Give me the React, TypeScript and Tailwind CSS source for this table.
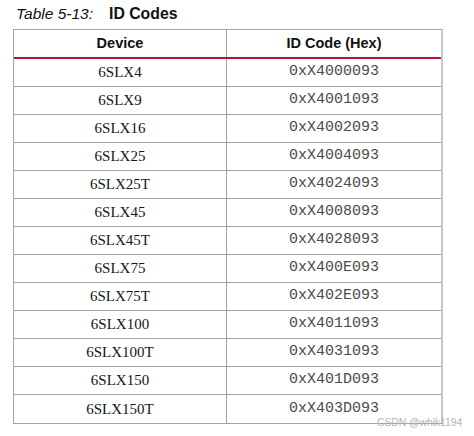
import React from "react";

const rows: [string, string][] = [
  ["6SLX4", "0xX4000093"],
  ["6SLX9", "0xX4001093"],
  ["6SLX16", "0xX4002093"],
  ["6SLX25", "0xX4004093"],
  ["6SLX25T", "0xX4024093"],
  ["6SLX45", "0xX4008093"],
  ["6SLX45T", "0xX4028093"],
  ["6SLX75", "0xX400E093"],
  ["6SLX75T", "0xX402E093"],
  ["6SLX100", "0xX4011093"],
  ["6SLX100T", "0xX4031093"],
  ["6SLX150", "0xX401D093"],
  ["6SLX150T", "0xX403D093"],
];

export default function App() {
  return (
    <div className="relative w-[474px] h-[436px] overflow-hidden bg-white">
      <div className="h-[29px] pl-[16px] pt-[4px] flex items-start text-[#111]" style={{ fontFamily: '"Liberation Sans", Arial, sans-serif' }}>
        <span className="italic text-[15.5px] leading-[19px]">Table 5-13:</span>
        <span className="ml-[16px] font-bold text-[15.8px] leading-[19px]">ID Codes</span>
      </div>
      <div className="ml-[13px] w-[430px] border-l border-t border-b border-[#a3a3a3] border-r-2 border-r-[#c6c6c6]">
        <div className="grid grid-cols-[213px_1fr] h-[27px]" style={{ fontFamily: '"Liberation Sans", Arial, sans-serif' }}>
          <div className="border-r border-[#a3a3a3] flex items-center justify-center font-bold text-[14.5px] text-[#111]">Device</div>
          <div className="flex items-center justify-center font-bold text-[14.5px] text-[#111]">ID Code (Hex)</div>
        </div>
        <div className="h-[2px] bg-[#b3172f]" />
        {rows.map(([d, c], i) => (
          <div
            key={d}
            className={`grid grid-cols-[213px_1fr] h-[28px] ${i < rows.length - 1 ? "border-b border-[#a3a3a3]" : ""}`}
          >
            <div
              className="border-r border-[#a3a3a3] flex items-center justify-center text-[15px] text-[#161616]"
              style={{ fontFamily: '"Liberation Serif", "Times New Roman", serif' }}
            >
              {d}
            </div>
            <div
              className="flex items-center justify-center text-[15px] text-[#4a4a4a]"
              style={{ fontFamily: '"Liberation Mono", "Courier New", monospace' }}
            >
              {c}
            </div>
          </div>
        ))}
      </div>
      <div className="pl-[13px] pt-[9px] font-bold text-[14px] text-[#111]" style={{ fontFamily: '"Liberation Sans", Arial, sans-serif' }}>
        Notes:
      </div>
      <div
        className="absolute left-[377px] top-[416px] text-[10.3px] leading-[14px] text-[#b4b4b4]"
        style={{ fontFamily: '"Liberation Sans", Arial, sans-serif' }}
      >
        CSDN @whik1194
      </div>
    </div>
  );
}
